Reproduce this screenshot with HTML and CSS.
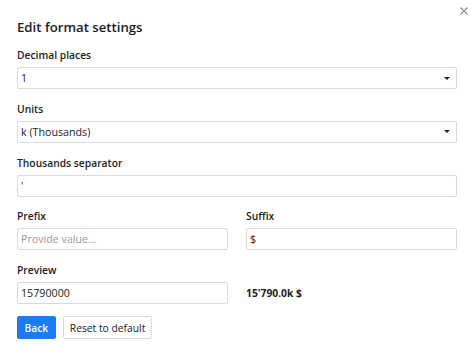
FILE: index.html
```html
<!DOCTYPE html>
<html>
<head>
<meta charset="utf-8">
<link rel="stylesheet" href="styles.css">
</head>
<body>
<div class="dialog">
  <button class="close" aria-label="Close">
    <svg width="8" height="8" viewBox="0 0 8 8"><path d="M0.5 0.5L7.5 7.5M7.5 0.5L0.5 7.5" stroke="#8f8f8f" stroke-width="1.2" fill="none"/></svg>
  </button>
  <h1 class="title">Edit format settings</h1>

  <div class="field">
    <label class="label">Decimal places</label>
    <div class="select"><span>1</span><span class="caret"></span></div>
  </div>

  <div class="field">
    <label class="label">Units</label>
    <div class="select"><span>k (Thousands)</span><span class="caret"></span></div>
  </div>

  <div class="field">
    <label class="label">Thousands separator</label>
    <div class="input">'</div>
  </div>

  <div class="row">
    <div class="field">
      <label class="label">Prefix</label>
      <div class="input placeholder">Provide value...</div>
    </div>
    <div class="field">
      <label class="label">Suffix</label>
      <div class="input">$</div>
    </div>
  </div>

  <div class="row">
    <div class="field">
      <label class="label">Preview</label>
      <div class="input">15790000</div>
    </div>
    <div class="field preview-out">
      <span class="preview-value">15'790.0k $</span>
    </div>
  </div>

  <div class="buttons">
    <button class="btn primary">Back</button>
    <button class="btn">Reset to default</button>
  </div>
</div>
</body>
</html>
```

FILE: styles.css
```css
* { box-sizing: border-box; }
html, body { margin: 0; padding: 0; background: #fff; }
body {
  font-family: "Open Sans", "Noto Sans", sans-serif;
  color: #1e1e1e;
  width: 474px;
  height: 353px;
  overflow: hidden;
}
.dialog {
  position: relative;
  padding: 17.6px 17px 0 17px;
}
.close {
  position: absolute;
  top: 7px;
  right: 6px;
  border: 0;
  background: none;
  padding: 0;
  width: 8px;
  height: 8px;
  display: flex;
}
.title {
  margin: 0 0 12.7px 0;
  font-size: 13.2px;
  font-weight: 600;
  line-height: 18px;
  color: #1c1c1c;
}
.field {
  display: flex;
  flex-direction: column;
  margin-bottom: 12.7px;
}
.label {
  font-size: 10.3px;
  font-weight: 600;
  line-height: 14px;
  margin-bottom: 5px;
  color: #1c1c1c;
}
.select, .input {
  height: 22px;
  border: 1px solid #dadada;
  border-radius: 2px;
  display: flex;
  align-items: center;
  justify-content: space-between;
  padding: 0 6px 0 3px;
  font-size: 10.7px;
  color: #222;
  background: #fff;
}
.placeholder { color: #9b9b9b; }
.caret {
  width: 0;
  height: 0;
  border-left: 3px solid transparent;
  border-right: 3px solid transparent;
  border-top: 3.5px solid #222;
}
.row {
  display: grid;
  grid-template-columns: 1fr 1fr;
  column-gap: 18px;
}
.preview-out {
  justify-content: flex-end;
}
.preview-value {
  height: 22px;
  display: flex;
  align-items: center;
  font-size: 10.3px;
  font-weight: 700;
  color: #1c1c1c;
}
.buttons {
  display: flex;
  gap: 7px;
  margin-top: -0.5px;
}
.btn {
  height: 23px;
  padding: 0 6px;
  border: 1px solid #dadada;
  border-radius: 2px;
  background: #fff;
  font-family: inherit;
  font-size: 10.3px;
  color: #222;
}
.btn.primary {
  background: #1a7cf2;
  border-color: #1a7cf2;
  color: #fff;
  font-weight: 600;
  padding: 0 6.5px;
}
```
